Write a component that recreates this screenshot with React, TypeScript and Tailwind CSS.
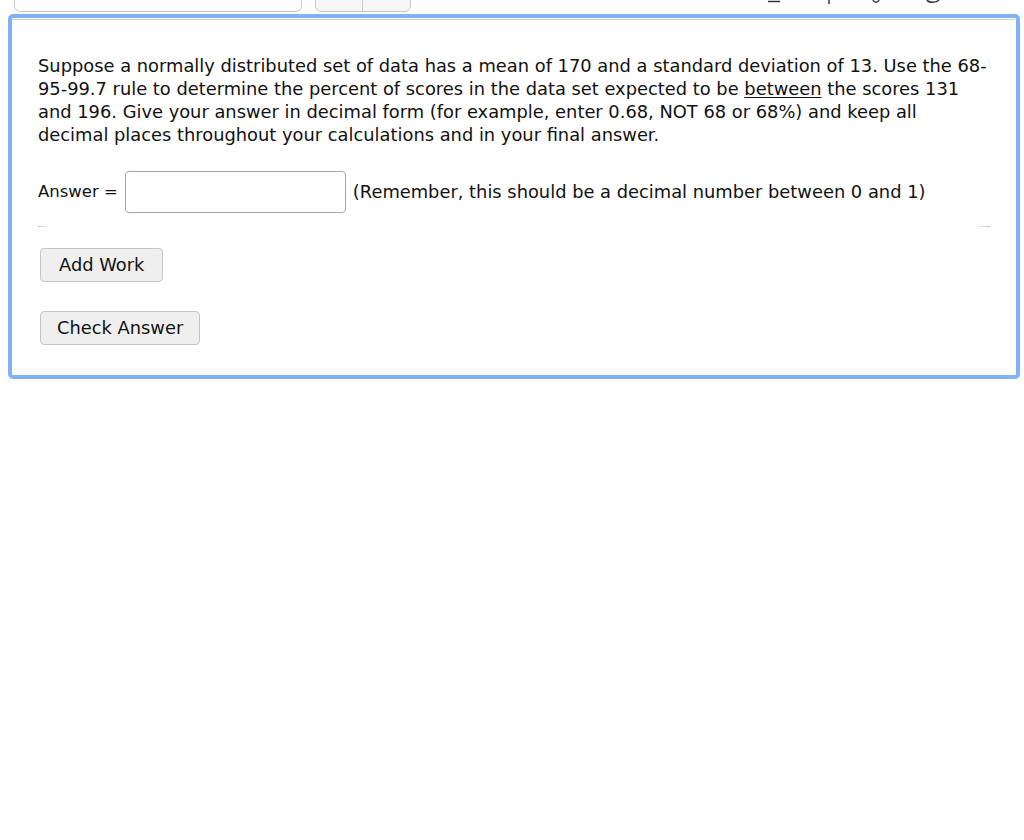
export default function App() {
  return (
    <div className="min-h-screen bg-white text-black" style={{ fontFamily: '"DejaVu Sans", Verdana, sans-serif' }}>
      {/* toolbar, mostly scrolled off the top */}
      <div className="relative h-[12px]">
        <div className="absolute left-[14px] -top-[30px] h-[42px] w-[288px] rounded-[6px] border border-[#c8c8c8] bg-white" />
        <div className="absolute left-[315px] -top-[30px] flex h-[42px] w-[96px] overflow-hidden rounded-[6px] border border-[#c8c8c8] bg-[#f6f6f6]">
          <div className="w-[47px] border-r border-[#c8c8c8]" />
          <div className="flex-1" />
        </div>
        <svg className="absolute left-[760px] top-0" width="200" height="8" viewBox="0 0 200 8">
          <path d="M8 1.5h12" stroke="#333" strokeWidth="1.5" />
          <path d="M69 0v4" stroke="#333" strokeWidth="1.5" />
          <path d="M113 0c1 3 5 3 6 0" stroke="#333" strokeWidth="1.5" fill="none" />
          <path d="M167 0c2 3 9 3 12 0" stroke="#333" strokeWidth="1.5" fill="none" />
        </svg>
      </div>

      <div className="ml-[8px] mt-[2px] w-[1012px] rounded-[5px] border-4 border-[#7fb2f6]">
        <div className="mt-px h-px w-[1003px] bg-[#cccccc]" />
        <div className="pb-[30px] pl-[26px] pr-[26px] pt-[34px]">
          <p className="text-[17.85px] leading-[23px] text-[#111]">
            Suppose a normally distributed set of data has a mean of 170 and a standard deviation of 13. Use the 68-95-99.7 rule to determine the percent of scores in the data set expected to be{" "}
            <span className="underline underline-offset-2">between</span> the scores 131 and 196. Give your answer in decimal form (for example, enter 0.68, NOT 68 or 68%) and keep all decimal places throughout your calculations and in your final answer.
          </p>

          <div className="mt-[25px] flex items-center">
            <span className="text-[16.5px] text-[#111]">Answer =</span>
            <input
              type="text"
              className="ml-[7px] h-[42px] w-[221px] rounded-[4px] border border-[#a9a9a9] bg-white px-2 outline-none"
            />
            <span className="ml-[7px] text-[17.85px] text-[#111]">
              (Remember, this should be a decimal number between 0 and 1)
            </span>
          </div>

          <div className="mr-0 mt-[13px] flex justify-between">
            <div className="h-px w-[12px] bg-gradient-to-r from-[#bbbbbb] to-transparent" />
            <div className="h-px w-[14px] bg-gradient-to-l from-[#bbbbbb] to-transparent" />
          </div>

          <div className="mt-[21px] flex flex-col items-start gap-[29px] pl-[2px]">
            <button className="h-[34px] rounded-[4px] border border-[#c4c4c4] bg-[#efefef] px-[18px] text-[17.85px] text-[#111]">
              Add Work
            </button>
            <button className="h-[34px] rounded-[4px] border border-[#c4c4c4] bg-[#efefef] px-[16px] text-[17.85px] text-[#111]">
              Check Answer
            </button>
          </div>
        </div>
      </div>
    </div>
  );
}
